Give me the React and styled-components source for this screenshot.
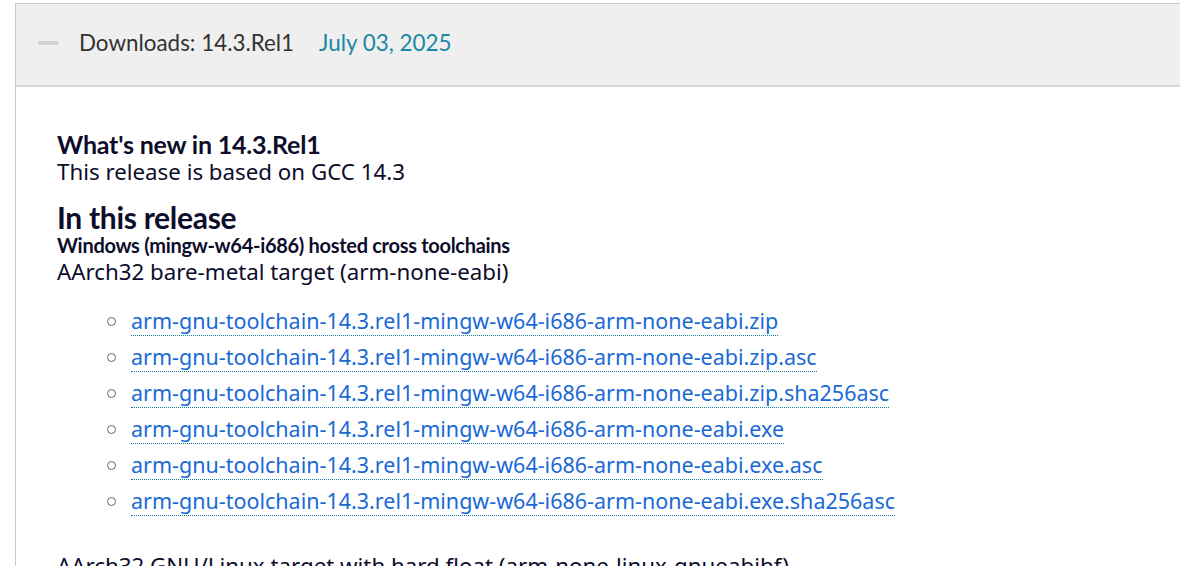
import React from 'react';
import styled, { createGlobalStyle } from 'styled-components';

const GlobalStyle = createGlobalStyle`
  html, body {
    margin: 0;
    padding: 0;
    background: #fff;
    overflow: hidden;
  }
`;

const Page = styled.div`
  width: 1180px;
  height: 566px;
  padding: 3px 0 0 15px;
  box-sizing: border-box;
  overflow: hidden;
`;

const Panel = styled.section`
  border-left: 1px solid #c8c8c8;
  border-top: 1px solid #c8c8c8;
  margin-right: -20px;
  height: 100%;
`;

const Header = styled.div`
  display: flex;
  align-items: center;
  height: 83px;
  background: #efefef;
  border-bottom: 2px solid #d6d6d6;
  padding-left: 22px;
  padding-bottom: 4px;
  box-sizing: border-box;
  font-family: Lato, "Liberation Sans", sans-serif;
  font-size: 22.4px;
`;

const Minus = styled.span`
  width: 21px;
  height: 4px;
  border-radius: 2px;
  background: #d2d2d2;
  margin-right: 20px;
`;

const Title = styled.span`
  color: #333;
`;

const Date = styled.span`
  color: #1b87a7;
  margin-left: 25px;
`;

const Body = styled.div`
  padding: 43px 0 0 41px;
  color: #0d0d2b;
  font-family: "Noto Sans", "Open Sans", sans-serif;
`;

const H4 = styled.h4`
  margin: 0;
  font-family: Lato, sans-serif;
  font-weight: 700;
  font-size: 25px;
  line-height: 28px;
  letter-spacing: -0.2px;
`;

const H2 = styled.h2`
  margin: 14px 0 0;
  font-family: Lato, sans-serif;
  font-weight: 700;
  font-size: 30px;
  line-height: 34px;
  letter-spacing: -0.3px;
`;

const H5 = styled.h5`
  margin: 0;
  font-family: Lato, sans-serif;
  font-weight: 700;
  font-size: 20px;
  line-height: 22px;
  letter-spacing: -0.3px;
`;

const Text = styled.p`
  margin: 0;
  font-size: 22.3px;
  line-height: 28px;
  margin-top: ${(p) => p.$top || 0}px;
`;

const List = styled.ul`
  list-style: none;
  margin: 17px 0 0;
  padding-left: 50px;
`;

const Item = styled.li`
  display: flex;
  align-items: center;
  height: 36px;
  font-size: 21.5px;
  &::before {
    content: '';
    width: 7px;
    height: 7px;
    border: 1.5px solid #666;
    border-radius: 50%;
    margin-right: 15px;
    flex-shrink: 0;
  }
`;

const Link = styled.a`
  color: #1a6ad6;
  text-decoration: none;
  border-bottom: 1px dotted #0e7d9b;
  line-height: 29px;
`;

const files = [
  'arm-gnu-toolchain-14.3.rel1-mingw-w64-i686-arm-none-eabi.zip',
  'arm-gnu-toolchain-14.3.rel1-mingw-w64-i686-arm-none-eabi.zip.asc',
  'arm-gnu-toolchain-14.3.rel1-mingw-w64-i686-arm-none-eabi.zip.sha256asc',
  'arm-gnu-toolchain-14.3.rel1-mingw-w64-i686-arm-none-eabi.exe',
  'arm-gnu-toolchain-14.3.rel1-mingw-w64-i686-arm-none-eabi.exe.asc',
  'arm-gnu-toolchain-14.3.rel1-mingw-w64-i686-arm-none-eabi.exe.sha256asc',
];

const App = () => {
  return (
    <Page>
      <GlobalStyle />
      <Panel>
        <Header>
          <Minus />
          <Title>Downloads: 14.3.Rel1</Title>
          <Date>July 03, 2025</Date>
        </Header>
        <Body>
          <H4>What's new in 14.3.Rel1</H4>
          <Text>This release is based on GCC 14.3</Text>
          <H2>In this release</H2>
          <H5>Windows (mingw-w64-i686) hosted cross toolchains</H5>
          <Text $top={2}>AArch32 bare-metal target (arm-none-eabi)</Text>
          <List>
            {files.map((f) => (
              <Item key={f}>
                <Link href="#">{f}</Link>
              </Item>
            ))}
          </List>
          <Text $top={33}>AArch32 GNU/Linux target with hard float (arm-none-linux-gnueabihf)</Text>
        </Body>
      </Panel>
    </Page>
  );
};

export default App;
